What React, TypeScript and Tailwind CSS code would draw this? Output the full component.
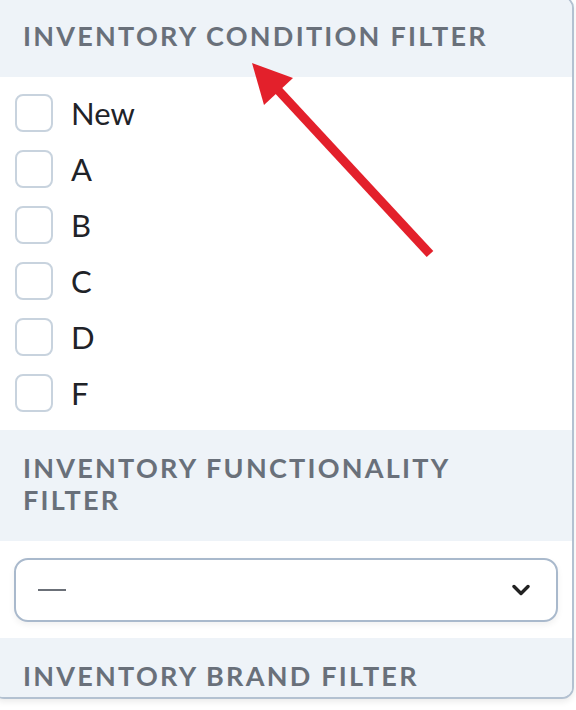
import React from "react";

const grades = ["New", "A", "B", "C", "D", "F"];

function SectionHeader({ children, last }: { children: React.ReactNode; last?: boolean }) {
  return (
    <div className={`bg-[#eef3f8] pl-[23px] pr-4 pt-[22px] ${last ? "pb-[5px]" : "pb-[25px]"}`}>
      <h3 className="text-[27px] leading-[32px] font-bold uppercase tracking-[0.083em] text-[#69707a]">
        {children}
      </h3>
    </div>
  );
}

export default function App() {
  return (
    <div
      className="relative w-[576px] h-[710px] overflow-hidden bg-white"
      style={{ fontFamily: "Lato, 'Noto Sans', sans-serif" }}
    >
      <div className="ml-[-8px] mt-[-4px] w-[582px] rounded-[12px] border-2 border-[#b3c1d1] bg-[#eef3f8] overflow-hidden shadow-[0_3px_6px_rgba(0,0,0,0.08)]">
        <div className="pl-[6px] bg-[#eef3f8]">
          <SectionHeader>Inventory Condition Filter</SectionHeader>
        </div>

        <div className="pl-[21px] pt-2 pb-[9px] bg-white">
          {grades.map((g) => (
            <label key={g} className="flex items-center gap-[18px] h-[56px]">
              <span className="w-[38px] h-[38px] rounded-[8px] border-2 border-[#c8d3de] bg-white" />
              <span className="text-[31px] text-[#1f2328]">{g}</span>
            </label>
          ))}
        </div>

        <div className="pl-[6px] bg-[#eef3f8]">
          <SectionHeader>
            Inventory Functionality
            <br />
            Filter
          </SectionHeader>
        </div>

        <div className="pl-[20px] pr-[14px] pt-[17px] pb-[16px] bg-white">
          <div className="flex items-center justify-between h-[64px] rounded-[14px] border-2 border-[#a9b9cc] bg-white pl-[22px] pr-[26px] shadow-[0_3px_6px_rgba(0,0,0,0.06)]">
            <span className="block w-[28px] h-[2px] bg-[#6b7078]" />
            <svg width="18" height="12" viewBox="0 0 18 12">
              <path d="M2 2.5 L9 9.5 L16 2.5" fill="none" stroke="#222" strokeWidth="3.4" strokeLinecap="round" strokeLinejoin="round" />
            </svg>
          </div>
        </div>

        <div className="pl-[6px] bg-[#eef3f8]">
          <SectionHeader last>Inventory Brand Filter</SectionHeader>
        </div>
      </div>

      <svg className="absolute left-0 top-0 pointer-events-none" width="576" height="710">
        <line x1="430" y1="254" x2="278" y2="90" stroke="#e3202b" strokeWidth="9" />
        <polygon points="252,63 264,105 293,78" fill="#e3202b" />
      </svg>
    </div>
  );
}
